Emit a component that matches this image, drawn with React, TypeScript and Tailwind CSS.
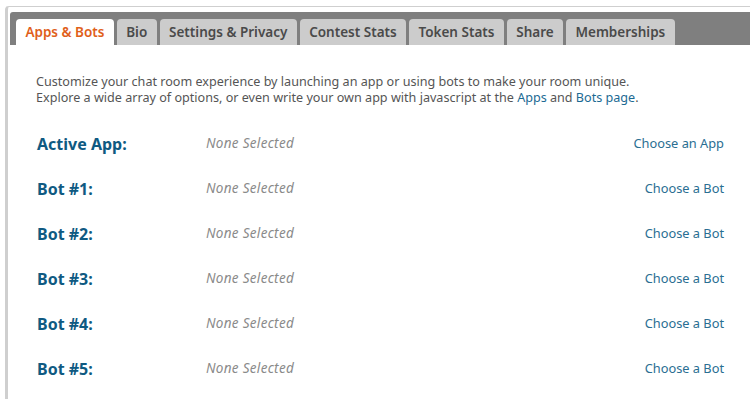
import React from 'react';

const tabs = ['Apps & Bots', 'Bio', 'Settings & Privacy', 'Contest Stats', 'Token Stats', 'Share', 'Memberships'];

const rows = [
  { label: 'Active App:', action: 'Choose an App' },
  { label: 'Bot #1:', action: 'Choose a Bot' },
  { label: 'Bot #2:', action: 'Choose a Bot' },
  { label: 'Bot #3:', action: 'Choose a Bot' },
  { label: 'Bot #4:', action: 'Choose a Bot' },
  { label: 'Bot #5:', action: 'Choose a Bot' },
];

export default function App() {
  return (
    <div
      className="h-[399px] w-[750px] overflow-hidden bg-white pl-[5px] pt-[6px]"
      style={{ fontFamily: '"Noto Sans", "Open Sans", sans-serif' }}
    >
      <div className="h-full rounded-tl-[4px] border-l-[3px] border-t border-[#cfcfcf] pl-[2px] pt-[5px]">
        {/* tab strip */}
        <div className="flex h-[33px] items-end gap-[3px] rounded-tl-[3px] bg-[#7f7f7f] pl-[6px]">
          {tabs.map((t, i) => (
            <div
              key={t}
              className={`flex h-[26px] items-center rounded-t-[4px] px-[9.4px] pt-[2px] text-[13.5px] font-semibold leading-none ${
                i === 0 ? 'bg-white text-[#e0601a]' : 'bg-[#cccccc] text-[#4a4a4a]'
              }`}
            >
              {t}
            </div>
          ))}
        </div>

        <div className="pl-[26px] pr-[26px] pt-[29px]">
          <p className="text-[12.6px] leading-[16px] text-[#555]">
            Customize your chat room experience by launching an app or using bots to make your room unique.
            <br />
            Explore a wide array of options, or even write your own app with javascript at the{' '}
            <span className="text-[#1b6a93]">Apps</span> and <span className="text-[#1b6a93]">Bots page</span>.
          </p>

          <div className="mt-[15px] flex flex-col">
            {rows.map((r) => (
              <div key={r.label} className="flex h-[45px] items-center">
                <div className="w-[170px] pl-[1px] text-[16px] font-bold text-[#0f5a82]">{r.label}</div>
                <div className="flex-1 text-[13.5px] italic tracking-[0.3px] text-[#8a8a8a]">None Selected</div>
                <div className="text-[12.8px] text-[#2a6e92]">{r.action}</div>
              </div>
            ))}
          </div>
        </div>
      </div>
    </div>
  );
}
